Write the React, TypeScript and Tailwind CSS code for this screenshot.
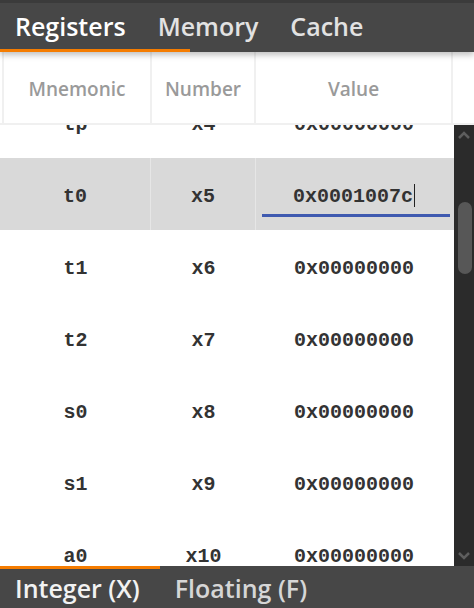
import React from "react";

const rows = [
  { m: "tp", n: "x4", v: "0x00000000" },
  { m: "t0", n: "x5", v: "0x0001007c", sel: true },
  { m: "t1", n: "x6", v: "0x00000000" },
  { m: "t2", n: "x7", v: "0x00000000" },
  { m: "s0", n: "x8", v: "0x00000000" },
  { m: "s1", n: "x9", v: "0x00000000" },
  { m: "a0", n: "x10", v: "0x00000000" },
];

const ui = { fontFamily: '"Open Sans", "Noto Sans", sans-serif' };
const mono = { fontFamily: '"Liberation Mono", "DejaVu Sans Mono", monospace' };

export default function App() {
  return (
    <div className="w-[474px] h-[608px] flex flex-col bg-white overflow-hidden" style={ui}>
      {/* top tabs */}
      <div className="h-[52px] flex flex-col bg-[#474747] border-t-[3px] border-[#3b3b3b] relative z-20 shadow-[0_3px_6px_rgba(0,0,0,0.25)]">
        <div className="flex-1 flex items-center pl-[15px] gap-[32px] text-[25px] font-semibold leading-none">
          <span className="text-white">Registers</span>
          <span className="text-[#e2e2e2]">Memory</span>
          <span className="text-[#e2e2e2]">Cache</span>
        </div>
        <div className="h-[3px] w-[190px] bg-[#f57c00]" />
      </div>
      {/* header */}
      <div className="h-[73px] flex bg-white relative z-10 border-b-2 border-[#f0f0f0] pl-[2px]">
        <div className="w-[150px] flex items-center justify-center pt-[4px] border-x-2 border-[#f0f0f0] text-[#9a9a9a] text-[19px] font-semibold">Mnemonic</div>
        <div className="w-[104px] flex items-center justify-center pt-[4px] border-r-2 border-[#f0f0f0] text-[#9a9a9a] text-[19px] font-semibold">Number</div>
        <div className="w-[197px] flex items-center justify-center pt-[4px] border-r-2 border-[#f0f0f0] text-[#9a9a9a] text-[19px] font-semibold">Value</div>
      </div>
      {/* body */}
      <div className="flex-1 flex overflow-hidden">
        <div className="w-[454px] overflow-hidden">
          <div className="mt-[-39px]">
            {rows.map((r) => (
              <div
                key={r.m}
                className={`h-[72px] flex text-[20px] font-bold text-[#333333] ${r.sel ? "bg-[#d9d9d9]" : "bg-white"}`}
                style={mono}
              >
                <div className={`w-[151px] flex items-center justify-center pt-[6px] ${r.sel ? "border-r border-[#e6e6e6]" : ""}`}>{r.m}</div>
                <div className={`w-[105px] flex items-center justify-center pt-[6px] ${r.sel ? "border-r border-[#e6e6e6]" : ""}`}>{r.n}</div>
                <div className="w-[196px] flex items-center justify-center pt-[6px] relative">
                  <span>
                    {r.v}
                    {r.sel && <span className="inline-block w-[1px] h-[23px] bg-[#222] align-[-5px] ml-[1px]" />}
                  </span>
                  {r.sel && <div className="absolute left-[6px] right-[2px] top-[56px] h-[3px] bg-[#3f5ab0]" />}
                </div>
              </div>
            ))}
          </div>
        </div>
        {/* scrollbar */}
        <div className="w-[20px] bg-[#2b2b2b] flex flex-col items-center justify-between py-[5px] relative">
          <svg width="12" height="8" viewBox="0 0 12 8" className="mt-[1px]">
            <path d="M1 7 L6 2 L11 7" stroke="#5e5e5e" strokeWidth="2.5" fill="none" />
          </svg>
          <div className="absolute left-[4px] top-[77px] w-[14px] h-[72px] rounded-full bg-[#575757]" />
          <svg width="12" height="8" viewBox="0 0 12 8" className="mb-[1px]">
            <path d="M1 1 L6 6 L11 1" stroke="#5e5e5e" strokeWidth="2.5" fill="none" />
          </svg>
        </div>
      </div>
      {/* bottom tabs */}
      <div className="h-[42px] flex flex-col bg-[#474747] relative z-20">
        <div className="h-[3px] w-[160px] bg-[#f57c00]" />
        <div className="flex-1 flex items-center pl-[15px] gap-[35px] text-[25px] font-semibold leading-none">
          <span className="text-[#f2f2f2]">Integer (X)</span>
          <span className="text-[#d6d6d6]">Floating (F)</span>
        </div>
      </div>
    </div>
  );
}
